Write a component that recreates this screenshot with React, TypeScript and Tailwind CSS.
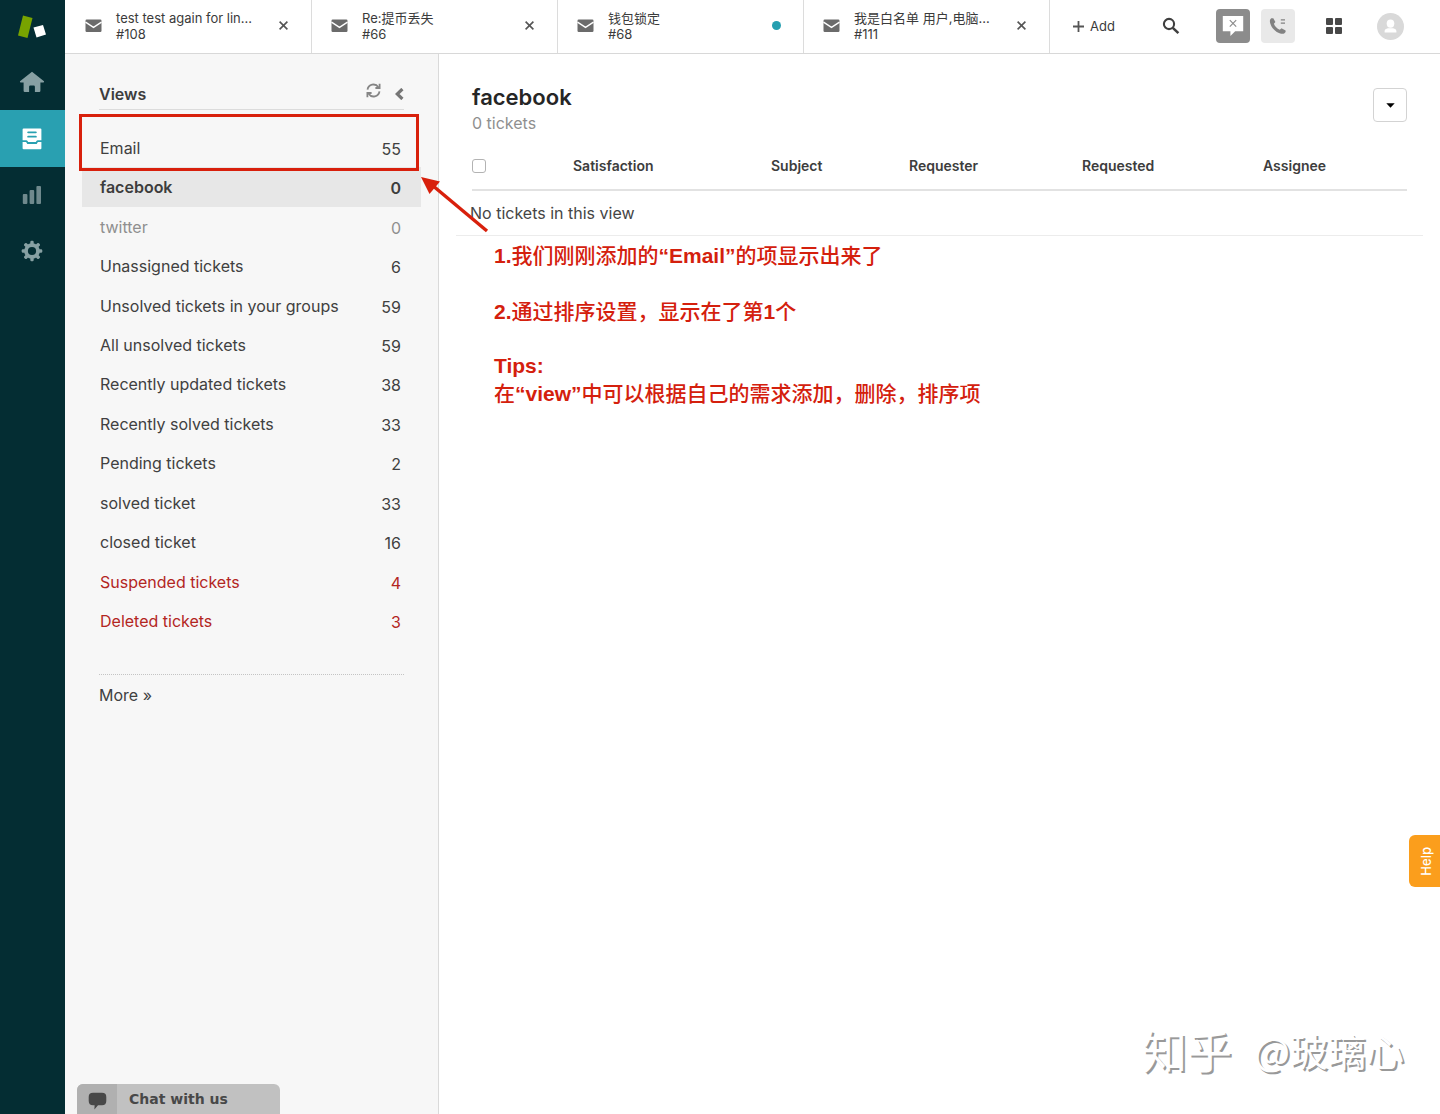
import React from "react";

type View = { name: string; count: number; tone?: "muted" | "danger"; active?: boolean };

const views: View[] = [
  { name: "Email", count: 55 },
  { name: "facebook", count: 0, active: true },
  { name: "twitter", count: 0, tone: "muted" },
  { name: "Unassigned tickets", count: 6 },
  { name: "Unsolved tickets in your groups", count: 59 },
  { name: "All unsolved tickets", count: 59 },
  { name: "Recently updated tickets", count: 38 },
  { name: "Recently solved tickets", count: 33 },
  { name: "Pending tickets", count: 2 },
  { name: "solved ticket", count: 33 },
  { name: "closed ticket", count: 16 },
  { name: "Suspended tickets", count: 4, tone: "danger" },
  { name: "Deleted tickets", count: 3, tone: "danger" },
];

const tabs = [
  { title: "test test again for lin...", id: "#108" },
  { title: "Re:提币丢失", id: "#66" },
  { title: "钱包锁定", id: "#68", unread: true },
  { title: "我是白名单 用户,电脑...", id: "#111" },
];

function MailIcon() {
  return (
    <svg width="17" height="14" viewBox="0 0 17 14" className="shrink-0" aria-hidden="true">
      <rect x="0.5" y="0.5" width="16" height="12.5" rx="1.2" fill="#6b6b6b" />
      <path d="M0.5 3.2 L8.5 8.4 L16.5 3.2" fill="none" stroke="#fff" strokeWidth="1.4" />
    </svg>
  );
}

function CloseIcon() {
  return (
    <svg width="9" height="9" viewBox="0 0 9 9" aria-hidden="true">
      <path d="M0.6 0.6 L8.4 8.4 M8.4 0.6 L0.6 8.4" stroke="#555" strokeWidth="1.6" />
    </svg>
  );
}

function SideNav() {
  return (
    <nav aria-label="Main" className="flex w-[65px] shrink-0 flex-col bg-[#042d33]">
      <a href="#" aria-label="Dashboard" className="flex h-[54px] items-center justify-center pr-0.5">
        <svg width="30" height="26" viewBox="0 0 30 26" aria-hidden="true">
          <path d="M6 1.5 L15.5 4 L10.5 24 L1 21.5 Z" fill="#78a300" />
          <path d="M16.5 13.5 L26 11 L29 20.5 L19.5 23.5 Z" fill="#fff" />
        </svg>
      </a>
      <a href="#" aria-label="Home" className="flex h-14 items-center justify-center pr-0.5">
        <svg width="26" height="22" viewBox="0 0 26 22" fill="#87a0a3" aria-hidden="true">
          <path d="M13 0.8 L25 10.3 Q25.4 11.4 24.4 11.4 H21.4 V19.8 Q21.4 21 20.2 21 H15.9 V15.8 Q15.9 14.6 14.7 14.6 H11.3 Q10.1 14.6 10.1 15.8 V21 H5.8 Q4.6 21 4.6 19.8 V11.4 H1.6 Q0.6 11.4 1 10.3 Z" />
        </svg>
      </a>
      <a href="#" aria-label="Views" aria-current="page" className="flex h-[57px] items-center justify-center bg-[#29a0b1] pr-0.5">
        <svg width="20" height="22" viewBox="0 0 20 22" fill="#fff" aria-hidden="true">
          <path fillRule="evenodd" d="M1.6 0.5 H18.4 Q19.4 0.5 19.4 1.5 V12.2 H15.8 Q14.8 12.2 14.3 13.2 L13.8 14.1 H6.2 L5.7 13.2 Q5.2 12.2 4.2 12.2 H0.6 V1.5 Q0.6 0.5 1.6 0.5 Z M6.2 3.4 H13.8 Q14.8 3.4 14.8 4.3 T13.8 5.2 H6.2 Q5.2 5.2 5.2 4.3 T6.2 3.4 Z M6.2 7.8 H13.8 Q14.8 7.8 14.8 8.7 T13.8 9.6 H6.2 Q5.2 9.6 5.2 8.7 T6.2 7.8 Z" />
          <path d="M0.6 14 H4.1 L5.3 16 H14.7 L15.9 14 H19.4 V20.2 Q19.4 21.2 18.4 21.2 H1.6 Q0.6 21.2 0.6 20.2 Z" />
        </svg>
      </a>
      <a href="#" aria-label="Reporting" className="flex h-14 items-center justify-center pr-0.5">
        <svg width="20" height="20" viewBox="0 0 20 20" fill="#6f898d" aria-hidden="true">
          <rect x="0.8" y="9" width="4.6" height="10" rx="1" />
          <rect x="7.6" y="5" width="4.6" height="14" rx="1" />
          <rect x="14.4" y="1" width="4.6" height="18" rx="1" />
        </svg>
      </a>
      <a href="#" aria-label="Admin" className="flex h-14 items-center justify-center pr-0.5">
        <svg width="22" height="22" viewBox="-11 -11 22 22" fill="#87a0a3" aria-hidden="true">
          {[0, 45, 90, 135].map((a) => (
            <rect key={a} x="-1.7" y="-10.3" width="3.4" height="20.6" rx="1.2" transform={`rotate(${a})`} />
          ))}
          <circle r="7.8" />
          <circle r="4.1" fill="#042d33" />
        </svg>
      </a>
    </nav>
  );
}

function TopBar() {
  return (
    <header className="flex h-[54px] border-b border-[#d8d8d8] bg-white pl-px text-[13px] leading-4 text-[#3b3b3b]">
      {tabs.map((t) => (
        <div key={t.id} className="flex w-[246px] shrink-0 items-center border-r border-[#dcdcdc] pr-[23px] pb-0.5 pl-[19px]">
          <MailIcon />
          <a href="#" className="ml-3.5 block min-w-0 flex-1 whitespace-nowrap">
            <span className="block">{t.title}</span>
            <span className="block">{t.id}</span>
          </a>
          {t.unread ? (
            <span className="-mr-px size-[9px] rounded-full bg-[#259fb0]" />
          ) : (
            <button type="button" aria-label={`Close ${t.id}`}>
              <CloseIcon />
            </button>
          )}
        </div>
      ))}
      <button type="button" className="ml-[23px] flex items-center gap-1.5 pb-px">
        <svg width="11" height="11" viewBox="0 0 11 11" aria-hidden="true">
          <path d="M5.5 0 V11 M0 5.5 H11" stroke="#555" strokeWidth="1.8" />
        </svg>
        Add
      </button>
      <div className="ml-auto flex items-center pr-9 pb-px">
        <button type="button" aria-label="Search" className="mr-9">
          <svg width="18" height="18" viewBox="0 0 18 18" fill="none" stroke="#3f3f3f" aria-hidden="true">
            <circle cx="7" cy="7" r="5.1" strokeWidth="2.1" />
            <path d="M10.8 10.8 L16.4 16.2" strokeWidth="2.5" />
          </svg>
        </button>
        <button type="button" aria-label="Chat" className="mr-[11px] flex size-[34px] items-center justify-center rounded bg-[#8c8c8c]">
          <svg width="22" height="22" viewBox="0 0 22 22" aria-hidden="true">
            <path d="M0.8 1 H21.2 V16.2 H13.2 L8.4 21 V16.2 H0.8 Z" fill="#fff" />
            <path d="M7.8 5.2 L14.2 11.6 M14.2 5.2 L7.8 11.6" stroke="#8c8c8c" strokeWidth="1.2" />
          </svg>
        </button>
        <button type="button" aria-label="Talk" className="mr-[31px] flex size-[34px] items-center justify-center rounded bg-[#e9e9e9]">
          <svg width="18" height="18" viewBox="0 0 18 18" aria-hidden="true">
            <path d="M2.2 1.2 L4.3 1.2 L6.4 5 L4.9 6.8 C5.9 9.5 8 11.7 10.8 12.8 L12.5 11.3 L16.6 13.4 V15 C15.4 17 13.4 17.2 11.2 16.5 C6.4 14.9 2.6 11 1.2 6.2 C0.6 4.1 0.8 2.4 2.2 1.2 Z" fill="#828282" />
            <path d="M11.8 2.8 H16 M11.8 6.2 H16" stroke="#828282" strokeWidth="1.3" />
          </svg>
        </button>
        <button type="button" aria-label="Products" className="mr-[35px]">
          <svg width="16" height="16" viewBox="0 0 16 16" fill="#484848" aria-hidden="true">
            <rect width="7" height="7" rx="1" />
            <rect x="9" width="7" height="7" rx="1" />
            <rect y="9" width="7" height="7" rx="1" />
            <rect x="9" y="9" width="7" height="7" rx="1" />
          </svg>
        </button>
        <button type="button" aria-label="Profile">
          <svg width="27" height="27" viewBox="0 0 27 27" aria-hidden="true">
            <circle cx="13.5" cy="13.5" r="13.5" fill="#d9d9d9" />
            <ellipse cx="13.5" cy="10.6" rx="3.8" ry="4.2" fill="#fff" />
            <path d="M7.6 19.6 V18 Q7.6 16 11 15.2 H16 Q19.4 16 19.4 18 V19.6 Z" fill="#fff" />
          </svg>
        </button>
      </div>
    </header>
  );
}

function viewTone(v: View) {
  if (v.active) return "bg-[#e7e7e7] font-semibold text-[#3d3d3d]";
  if (v.tone === "muted") return "text-[#8f8f8f]";
  if (v.tone === "danger") return "text-[#b3261f]";
  return "text-[#404040]";
}

function ViewsPanel() {
  return (
    <aside className="w-[374px] shrink-0 border-r border-[#dadada] bg-[#f7f7f7] px-[17px] pt-6">
      <div className="mx-[17px] flex h-8 items-center border-b border-[#dcdcdc]">
        <h2 className="text-base leading-6 font-semibold text-[#3d3d3d]">Views</h2>
        <button type="button" aria-label="Refresh views" className="mr-3.5 mb-1.5 ml-auto">
          <svg width="15" height="15" viewBox="0 0 15 15" fill="none" stroke="#858585" strokeWidth="1.8" aria-hidden="true">
            <path d="M1.5 6.6 A6 6 0 0 1 12.4 4.2 M13.5 8.4 A6 6 0 0 1 2.6 10.8" />
            <path d="M13.6 0.8 V5 H9.4 M1.4 14.2 V10 H5.6" />
          </svg>
        </button>
        <button type="button" aria-label="Collapse views">
          <svg width="9" height="12" viewBox="0 0 9 12" aria-hidden="true">
            <path d="M7.4 1 L2.2 6 L7.4 11" fill="none" stroke="#767676" strokeWidth="3.2" />
          </svg>
        </button>
      </div>
      <div className="relative pt-[18px]">
        <ul className="grid h-[531px] auto-rows-fr pb-[18px] text-base leading-6">
          {views.map((v) => (
            <li key={v.name} className={viewTone(v)}>
              <a href="#" className="flex h-full items-center justify-between pr-5 pl-[18px]">
                <span>{v.name}</span>
                <span className="pt-0.5">{v.count}</span>
              </a>
            </li>
          ))}
        </ul>
        <div className="pointer-events-none absolute top-1 right-0.5 -left-[3px] h-[57px] border-[3px] border-[#d8200c]" />
        <svg className="pointer-events-none absolute top-[66px] left-[338px] z-10" width="70" height="58" viewBox="0 0 70 58" aria-hidden="true">
          <path d="M12 9 L67 55" stroke="#d8200c" strokeWidth="3.4" />
          <path d="M1 1 L20 5.5 L9.5 18 Z" fill="#d8200c" />
        </svg>
      </div>
      <div className="mx-[17px] mt-[15px] border-t border-dotted border-[#c4c4c4] pt-2">
        <a href="#" className="text-base leading-6 text-[#404040]">More »</a>
      </div>
    </aside>
  );
}

function TicketList() {
  return (
    <main className="relative min-w-0 flex-1 bg-white px-[33px] pt-[29px]">
      <div className="flex items-start justify-between">
        <div>
          <h1 className="text-[22px] leading-7 font-semibold text-[#262626]">facebook</h1>
          <p className="text-base leading-6 text-[#8f8f8f]">0 tickets</p>
        </div>
        <button type="button" aria-label="View actions" className="mt-[5px] flex size-[34px] items-center justify-center rounded border border-[#d3d3d3] bg-white">
          <svg width="9" height="5" viewBox="0 0 9 5" aria-hidden="true">
            <path d="M0.3 0.3 H8.7 L4.5 4.8 Z" fill="#000" />
          </svg>
        </button>
      </div>
      <table className="mt-2 w-full table-fixed border-b-2 border-[#e2e2e2] text-left text-sm leading-4 text-[#3d3d3d]">
        <thead>
          <tr className="h-[47px]">
            <th className="w-[101px]">
              <input type="checkbox" aria-label="Select all tickets" className="block size-3.5 appearance-none rounded-[3px] border border-[#b3b3b3] bg-white" />
            </th>
            <th className="w-[198px] font-semibold">Satisfaction</th>
            <th className="w-[138px] font-semibold">Subject</th>
            <th className="w-[173px] font-semibold">Requester</th>
            <th className="w-[181px] font-semibold">Requested</th>
            <th className="w-[144px] font-semibold">Assignee</th>
          </tr>
        </thead>
      </table>
      <p className="-mx-4 border-b border-[#ececec] py-2.5 pl-3.5 text-base leading-6 text-[#454545]">No tickets in this view</p>

      <div className="pointer-events-none absolute top-[188px] left-[55px] font-['Liberation_Sans','Noto_Sans_CJK_SC',sans-serif] text-[21px] leading-7 font-medium whitespace-nowrap text-[#d4200d]">
        <p><b>1.</b>我们刚刚添加的<b>“Email”</b>的项显示出来了</p>
        <p className="mt-7"><b>2.</b>通过排序设置，显示在了第<b>1</b>个</p>
        <p className="mt-[26px]"><b>Tips:</b></p>
        <p>在<b>“view”</b>中可以根据自己的需求添加，删除，排序项</p>
      </div>

      <div className="pointer-events-none absolute right-9 bottom-[34px] flex gap-[22px] font-['Noto_Sans_CJK_SC',sans-serif] text-[38px] leading-[60px] whitespace-nowrap text-white [text-shadow:2px_2px_0_#999999]">
        <span className="text-[45px]">知乎</span>
        <span>@玻璃心</span>
      </div>
    </main>
  );
}

export default function App() {
  return (
    <div className="flex min-h-screen bg-white font-[Inter,'Noto_Sans_CJK_SC',sans-serif]">
      <SideNav />
      <div className="flex min-w-0 flex-1 flex-col">
        <TopBar />
        <div className="flex flex-1">
          <ViewsPanel />
          <TicketList />
        </div>
      </div>
      <button type="button" className="fixed bottom-0 left-[77px] flex h-[30px] w-[203px] items-center overflow-hidden rounded-t-md bg-[#c1c1c1] font-['DejaVu_Sans',sans-serif] text-sm font-bold text-[#484848]">
        <span className="flex h-full w-10 items-center justify-center bg-[#b0b0b0] pt-1">
          <svg width="19" height="18" viewBox="0 0 19 18" aria-hidden="true">
            <path d="M5 0.8 H14 Q18.3 0.8 18.3 5 V9 Q18.3 13.2 14 13.2 H10 L6.4 17.4 L6.6 13.2 H5 Q0.7 13.2 0.7 9 V5 Q0.7 0.8 5 0.8 Z" fill="#484848" />
          </svg>
        </span>
        <span className="ml-3">Chat with us</span>
      </button>
      <button type="button" className="fixed right-0 bottom-[227px] flex h-[52px] w-[31px] items-center justify-center rounded-l-md bg-[#fb9e1c] pl-1 text-[13px] font-medium text-white">
        <span className="rotate-180 [writing-mode:vertical-rl]">Help</span>
      </button>
    </div>
  );
}
